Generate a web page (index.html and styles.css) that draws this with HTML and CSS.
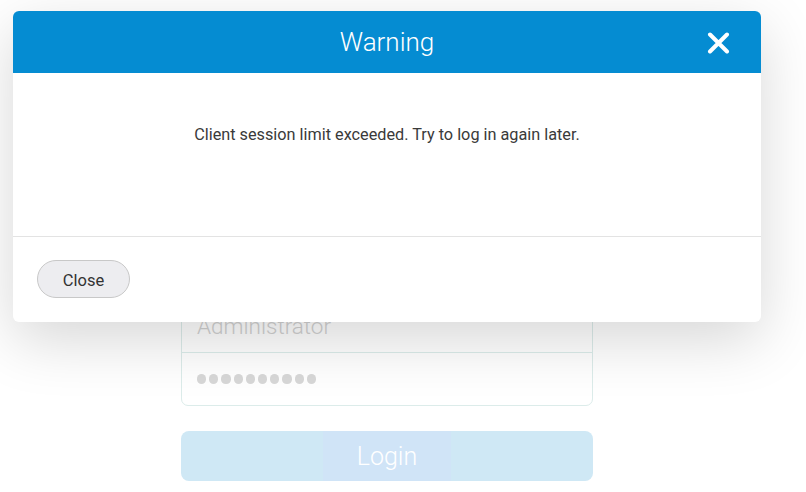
FILE: index.html
```html
<!DOCTYPE html>
<html>
<head>
<meta charset="utf-8">
<link rel="stylesheet" href="styles.css">
</head>
<body>
<main class="login">
  <div class="fields">
    <div class="field user">Administrator</div>
    <div class="field pass">
      <span class="dot"></span><span class="dot"></span><span class="dot"></span><span class="dot"></span><span class="dot"></span><span class="dot"></span><span class="dot"></span><span class="dot"></span><span class="dot"></span><span class="dot"></span>
    </div>
  </div>
  <button class="login-btn"><span class="login-label">Login</span></button>
</main>

<div class="modal">
  <div class="modal-header">
    <span></span>
    <h1 class="modal-title">Warning</h1>
    <button class="modal-x" aria-label="Close">
      <svg width="23" height="22" viewBox="0 0 23 22"><path d="M3 2.5 L20 19.5 M20 2.5 L3 19.5" stroke="#fff" stroke-width="4" stroke-linecap="round" fill="none"/></svg>
    </button>
  </div>
  <div class="modal-body">Client session limit exceeded. Try to log in again later.</div>
  <div class="modal-footer">
    <button class="close-btn">Close</button>
  </div>
</div>
</body>
</html>
```
FILE: styles.css
```css
html, body {
  margin: 0;
  background: #ffffff;
  font-family: "Roboto", "Liberation Sans", sans-serif;
}

.login {
  width: 412px;
  margin-left: 181px;
  padding-top: 299px;
}

.fields {
  border: 1px solid #dcecea;
  border-radius: 7px;
}

.field {
  height: 52px;
  display: flex;
  align-items: center;
  padding-left: 15px;
}

.field + .field {
  border-top: 1px solid #dcecea;
}

.user {
  font-size: 22.5px;
  font-weight: 300;
  color: #d2d2d2;
}

.pass {
  gap: 3px;
}

.dot {
  width: 9.2px;
  height: 9.2px;
  border-radius: 50%;
  background: #d8d8d8;
}

.login-btn {
  display: flex;
  justify-content: center;
  width: 412px;
  height: 50px;
  margin-top: 25px;
  padding: 0;
  border: none;
  border-radius: 8px;
  background: #cfe8f5;
  font-family: inherit;
}

.login-label {
  display: flex;
  align-items: center;
  justify-content: center;
  width: 128px;
  height: 50px;
  background: #d0e4f7;
  color: #ffffff;
  font-size: 25px;
  font-weight: 300;
}

.modal {
  position: absolute;
  top: 11px;
  left: 13px;
  width: 748px;
  background: #ffffff;
  border-radius: 6px;
  overflow: hidden;
  box-shadow: 0 18px 60px rgba(0, 0, 0, 0.16);
}

.modal-header {
  height: 62px;
  background: #058cd2;
  display: grid;
  grid-template-columns: 1fr auto 1fr;
  align-items: center;
}

.modal-title {
  margin: 0;
  font-size: 26px;
  font-weight: 300;
  color: #ffffff;
  line-height: 62px;
}

.modal-x {
  justify-self: end;
  margin-right: 31px;
  padding: 0;
  border: none;
  background: none;
  display: flex;
  margin-top: 1px;
}

.modal-body {
  padding: 52px 20px 91px;
  line-height: 20px;
  font-size: 16.25px;
  color: #3a3a3a;
  text-align: center;
}

.modal-footer {
  border-top: 1px solid #e3e3e3;
  padding: 23px 24px 24px;
  display: flex;
}

.close-btn {
  width: 93px;
  height: 38px;
  border: 1px solid #c8c8c8;
  border-radius: 19px;
  background: #ededf0;
  color: #333333;
  font-family: inherit;
  font-size: 16.5px;
  padding: 3px 0 0;
}
```
